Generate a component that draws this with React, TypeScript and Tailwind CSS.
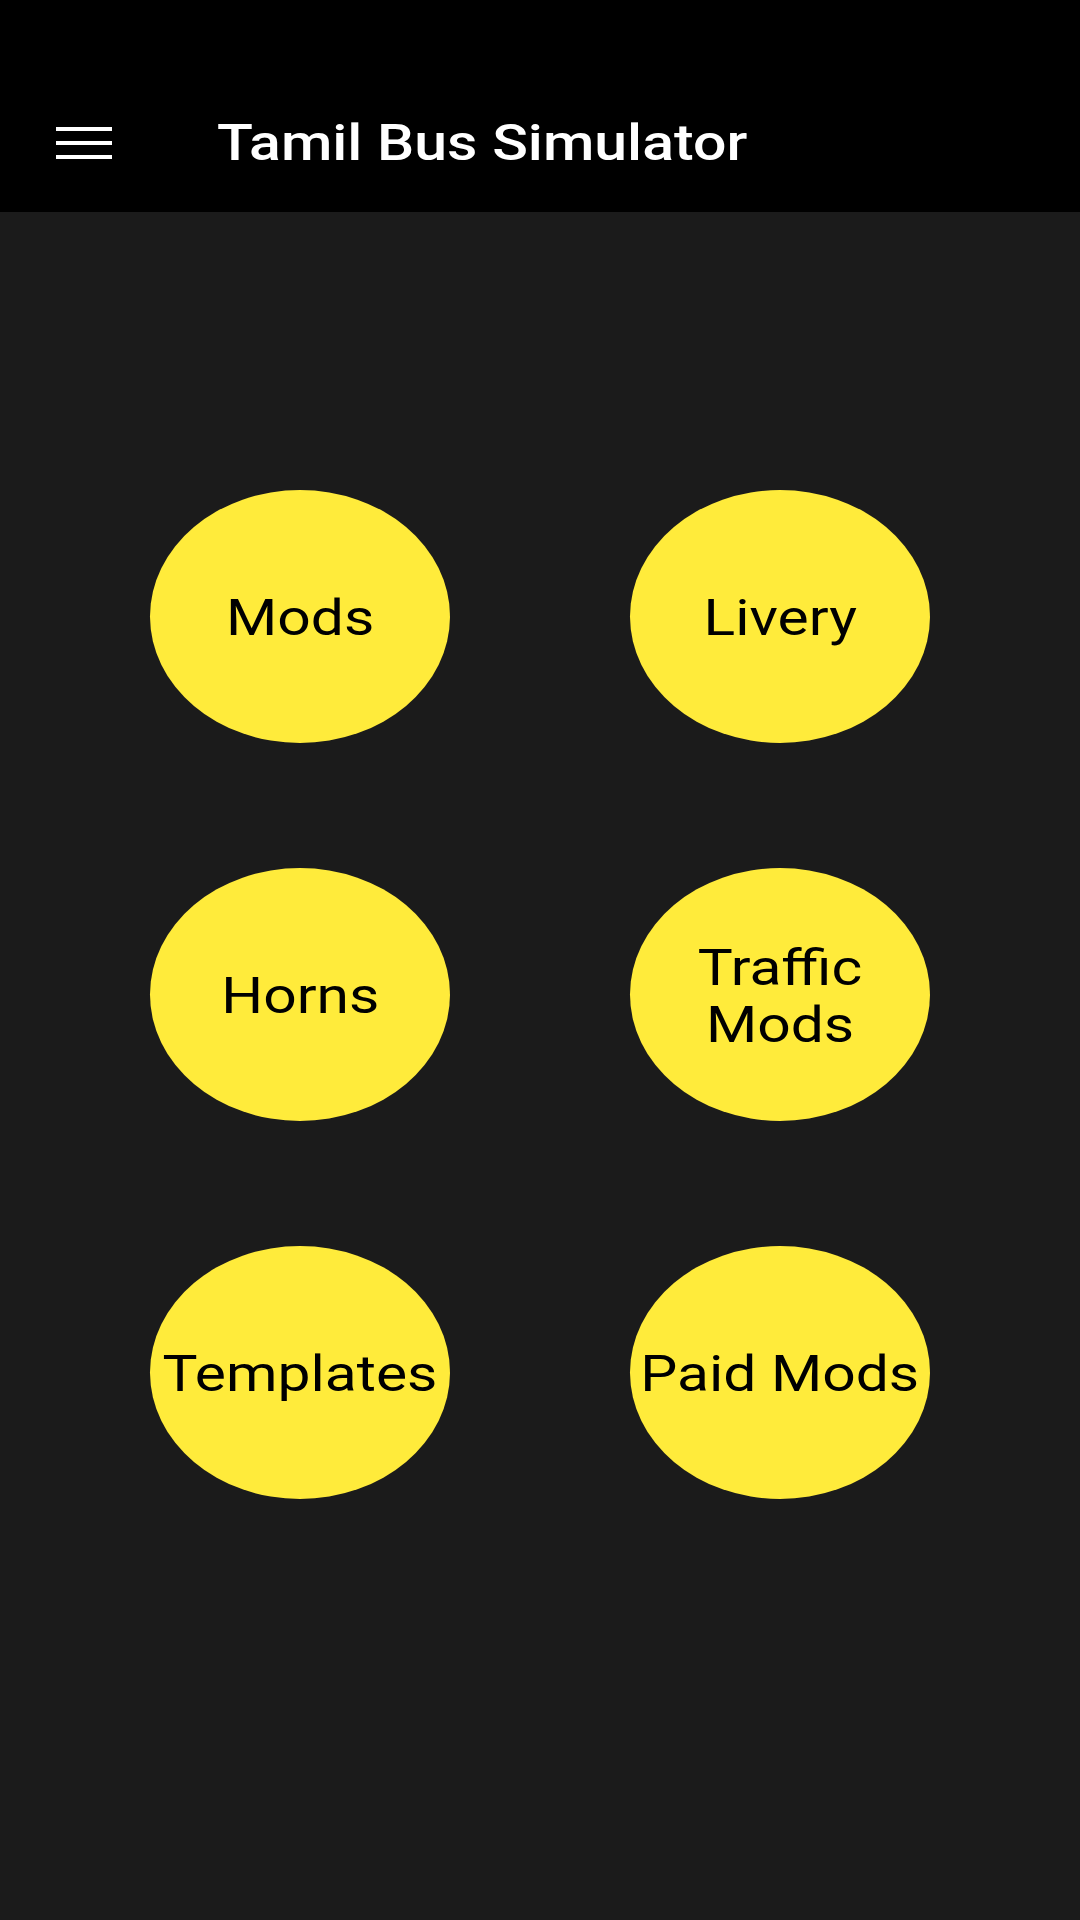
import { Fragment } from 'react'

const buttons = [['Mods'], ['Livery'], ['Horns'], ['Traffic', 'Mods'], ['Templates'], ['Paid Mods']]

export default function App() {
  return (
    <div className="flex h-[1920px] flex-col bg-[#1b1b1b] font-['Roboto',sans-serif]">
      <header className="flex h-[212px] shrink-0 items-center bg-black pt-[74px]">
        <div className="ml-[56px] flex w-[56px] flex-col gap-[10px]">
          <span className="h-[4px] w-full bg-white" />
          <span className="h-[4px] w-full bg-white" />
          <span className="h-[4px] w-full bg-white" />
        </div>
        <h1 className="ml-[105px] origin-left scale-x-[1.18] text-[50px] leading-none font-medium whitespace-nowrap text-white">
          Tamil Bus Simulator
        </h1>
      </header>
      <main className="grid grid-cols-[300px_300px] gap-x-[180px] gap-y-[125px] px-[150px] pt-[278px]">
        {buttons.map(lines => (
          <button
            key={lines.join(' ')}
            className="flex h-[253px] w-[300px] items-center justify-center rounded-[50%] bg-[#ffeb3b] pt-[4px] text-center text-[50px] leading-[57px] whitespace-nowrap text-black"
          >
            <span className="inline-block scale-x-[1.175]">
              {lines.map((l, i) => (
                <Fragment key={l}>
                  {i > 0 && <br />}
                  {l}
                </Fragment>
              ))}
            </span>
          </button>
        ))}
      </main>
    </div>
  )
}
